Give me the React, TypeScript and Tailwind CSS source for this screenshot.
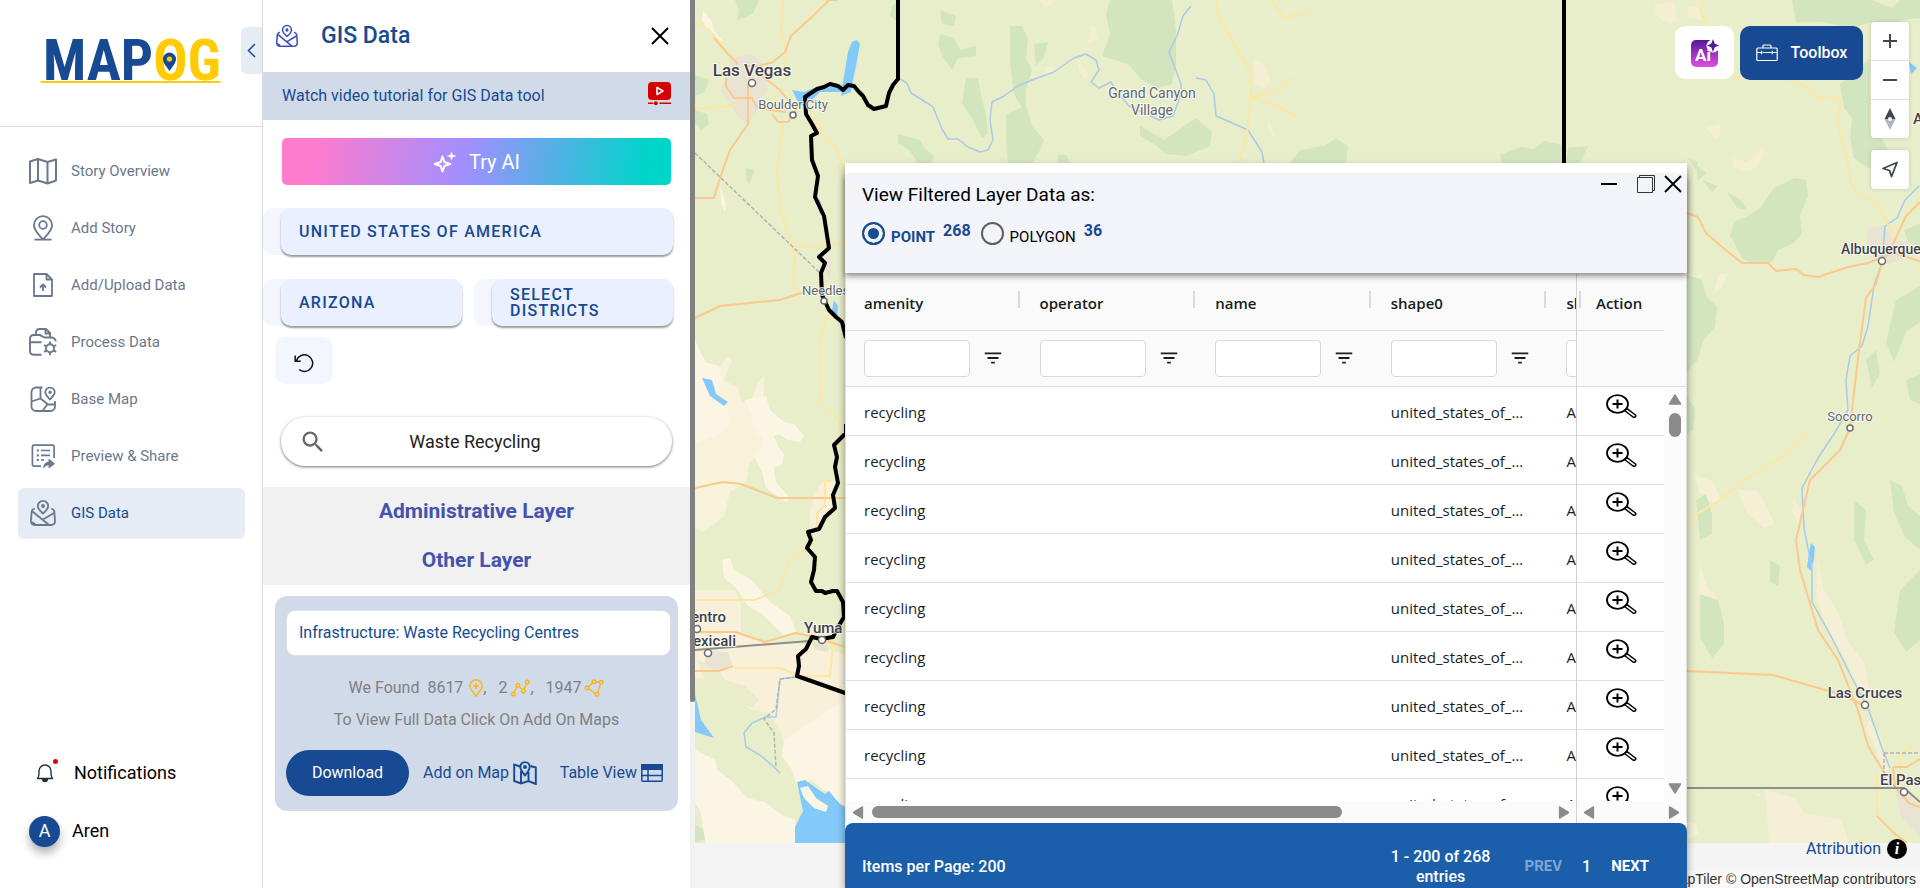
import { FC, ReactNode } from "react";
import { clsx } from "clsx";
import { MdSearch, MdFilterList } from "react-icons/md";

interface IconProps {
  className?: string;
}

const StoryIcon: FC<IconProps> = ({ className }) => (
  <svg viewBox="0 0 28 28" className={className} fill="none" stroke="currentColor" strokeWidth="2" strokeLinejoin="round">
    <path d="M1 4.500 9 2l9.500 3L27 2.500v21L18.500 26.500 9 23.500l-8 2.500zM9 2v21.500M18.500 5v21.500" />
  </svg>
);

const PinIcon: FC<IconProps> = ({ className }) => (
  <svg viewBox="0 0 28 28" className={className} fill="none" stroke="currentColor" strokeWidth="1.800">
    <path d="M14 25.500C10 21 4.900 16.500 4.900 11.300a9.100 9.100 0 0 1 18.200 0C23.100 16.500 18 21 14 25.500z" />
    <circle cx="14" cy="11" r="3.800" />
    <path d="M5.500 25.600h17" />
  </svg>
);

const UploadIcon: FC<IconProps> = ({ className }) => (
  <svg viewBox="0 0 28 28" className={className} fill="none" stroke="currentColor" strokeWidth="1.800" strokeLinejoin="round">
    <path d="M5 3h12.500l5.500 5.500V25H5zM17.500 3v5.500H23" />
    <path d="M14 20v-6M11 16.500l3-3 3 3" />
  </svg>
);

const ProcessIcon: FC<IconProps> = ({ className }) => (
  <svg viewBox="0 0 28 28" className={className} fill="none" stroke="currentColor" strokeWidth="1.900" strokeLinejoin="round">
    <path d="M12.500 26.800H4.500A3.500 3.500 0 0 1 1 23.300V10.500A3.500 3.500 0 0 1 4.500 7H10c3 0 3 2.500 6 2.500h6a4.500 4.500 0 0 1 4.800 3.800M1 14.300h11.500" />
    <path d="M7 7V4.300A3.300 3.300 0 0 1 10.300 1H17l4 4v4M16.500 1v4.500H21" />
    <circle cx="21" cy="20.300" r="4" />
    <path d="M21 13.500v3M21 24v3.300M15 17l2.700 1.500M24.500 22.300l2.700 1.500M15 23.800l2.700-1.500M24.500 18.500l2.700-1.500" />
  </svg>
);

const BaseMapIcon: FC<IconProps> = ({ className }) => (
  <svg viewBox="0 0 28 28" className={className} fill="none" stroke="currentColor" strokeWidth="1.800" strokeLinejoin="round">
    <path d="M13.500 2.500H7A4.500 4.500 0 0 0 2.500 7v14.500A4.500 4.500 0 0 0 7 26h14.500a4.500 4.500 0 0 0 4.500-4.500V16" />
    <path d="M11.500 2.500v11L2.500 16.500M11.500 13.500l7 5.500-5 7M18.500 19.500H26" />
    <path d="M21 14.500c-2.500-2.700-4.700-4.700-4.700-7.200a4.700 4.700 0 0 1 9.400 0c0 2.500-2.200 4.500-4.700 7.200z" />
    <circle cx="21" cy="7.300" r=".8" />
  </svg>
);

const PreviewIcon: FC<IconProps> = ({ className }) => (
  <svg viewBox="0 0 28 28" className={className} fill="none" stroke="currentColor" strokeWidth="1.700">
    <path d="M12 24.200H5A1.600 1.600 0 0 1 3.400 22.600V4.800A1.600 1.600 0 0 1 5 3.200h18.500a1.600 1.600 0 0 1 1.600 1.600V16" />
    <path d="M12 8.500h9M12 13.300h9M12 18h3" />
    <path d="M7.800 8.500h2M7.800 13.300h2M7.800 18h2" strokeWidth="2.200" />
    <path d="M14.500 26c.5-4.500 3-6 5.500-6v-3l5.500 4.800L20 26v-3c-2.500 0-4 .8-5.500 3z" fill="currentColor" strokeWidth=".8" />
  </svg>
);

const GisIcon: FC<IconProps> = ({ className }) => (
  <svg viewBox="0 0 28 28" className={className} fill="none" stroke="currentColor" strokeWidth="1.800" strokeLinejoin="round">
    <path d="M5.800 9.500C3.800 10 3 11 2.700 12.500L2 21.500C1.800 24.500 3.300 26 6 26h16c2.700 0 4.200-1.500 4-4.500l-.7-9c-.3-1.500-1.100-2.500-3.100-3" />
    <path d="M3.500 12.500 19.500 25.500M14 20.500 25 14M2.500 23l3.500 2" />
    <path d="M14 14.500c-3-2.500-5.200-4.500-5.200-7.500a5.200 5.200 0 0 1 10.400 0c0 3-2.200 5-5.200 7.500z" />
    <circle cx="14" cy="7" r="1" />
  </svg>
);

const CloseIcon: FC<IconProps> = ({ className }) => (
  <svg viewBox="0 0 18 18" className={className} fill="none" stroke="currentColor" strokeWidth="2">
    <path d="M1 1l16 16M17 1 1 17" />
  </svg>
);

const ZoomRowIcon: FC<IconProps> = ({ className }) => (
  <svg viewBox="0 0 31 24" className={className} fill="none" stroke="currentColor" strokeWidth="1.800">
    <ellipse cx="11.500" cy="10" rx="10.500" ry="8.800" />
    <path d="M6.500 10h10M11.500 5.500v9" strokeWidth="2" />
    <path d="m18.500 16.500 2.500-1.800 8.500 6.300c1 1.500-1 2.800-2.500 2zM18.500 16.500l8.500 6.500" strokeWidth="1.500" strokeLinejoin="round" />
  </svg>
);

interface NavItem {
  title: string;
  icon: FC<IconProps>;
  active?: boolean;
}

const navItems: NavItem[] = [
  { title: "Story Overview", icon: StoryIcon },
  { title: "Add Story", icon: PinIcon },
  { title: "Add/Upload Data", icon: UploadIcon },
  { title: "Process Data", icon: ProcessIcon },
  { title: "Base Map", icon: BaseMapIcon },
  { title: "Preview & Share", icon: PreviewIcon },
  { title: "GIS Data", icon: GisIcon, active: true },
];

const Logo: FC = () => (
  <svg viewBox="0 0 184 60" className="h-[60px] w-[184px] overflow-visible" role="img" aria-label="MAPOG">
    <text x="4" y="54" fontSize="57" fontWeight="700" className="font-['Liberation_Sans_Narrow','Roboto_Condensed','Liberation_Sans',sans-serif]">
      <tspan fill="#174a92">MAP</tspan>
      <tspan fill="#ffcb05">OG</tspan>
    </text>
    <path d="M130.500 45c-4-5.500-6.500-8.500-6.500-12a6.500 6.500 0 0 1 13 0c0 3.500-2.500 6.500-6.500 12z" fill="#174a92" />
    <circle cx="130.500" cy="33" r="2.600" fill="#ffcb05" />
    <path d="M1 55h181l-1 2H2z" fill="#ffcb05" />
  </svg>
);

const Sidebar: FC = () => (
  <aside className="relative flex w-[263px] shrink-0 flex-col border-r border-[#d9dadc] bg-white">
    <div className="flex h-[127px] shrink-0 justify-center border-b border-[#d9dadc] pt-[26px]">
      <Logo />
    </div>
    <button
      aria-label="Collapse sidebar"
      className="absolute right-0 top-[27px] flex h-[47px] w-[21px] items-center justify-center rounded-l-md bg-[#e6ecf4] text-[#174a92]"
    >
      <svg viewBox="0 0 9 15" className="h-[15px] w-[9px]" fill="none" stroke="currentColor" strokeWidth="1.500">
        <path d="M8 1 1.500 7.500 8 14" />
      </svg>
    </button>
    <nav className="flex flex-col gap-[6px] pl-[18px] pr-[17px] pt-[19px]">
      {navItems.map(({ title, icon: Icon, active }) => (
        <a
          key={title}
          href="#"
          className={clsx(
            "flex h-[51px] items-center gap-[14px] rounded-md pb-[1px] pl-[11px] text-[15px]",
            active ? "bg-[#e5ecf5] text-[#174a92]" : "text-[#6b778c]"
          )}
        >
          <Icon className="h-7 w-7 text-[#6b778c]" />
          {title}
        </a>
      ))}
    </nav>
    <div className="mt-auto flex flex-col gap-[26px] pb-[41px] text-lg leading-8">
      <a href="#" className="flex items-center pl-[36px]">
        <span className="relative">
          <svg viewBox="0 0 18 20" className="h-5 w-[18px]" fill="none" stroke="#26323a" strokeWidth="1.400">
            <path d="M1.500 15.500c2-2.500 1.500-5 1.500-7.500a6 6 0 0 1 12 0c0 2.500-.5 5 1.500 7.500z" strokeLinejoin="round" />
            <path d="M6.500 16.500c.5 2.700 4.500 2.700 5 0z" fill="#26323a" />
          </svg>
          <span className="absolute -right-1 -top-1 h-[5px] w-[5px] rounded-full bg-[#d60000]" />
        </span>
        <span className="pl-5">Notifications</span>
      </a>
      <a href="#" className="flex items-center gap-3 pl-[29px]">
        <span className="flex h-[31px] w-[31px] items-center justify-center rounded-full bg-[#174a92] text-white shadow-[0_6px_10px_rgba(0,0,0,0.3)]">
          A
        </span>
        Aren
      </a>
    </div>
  </aside>
);

interface FilterButtonProps {
  children: ReactNode;
}

const FilterButton: FC<FilterButtonProps> = ({ children }) => (
  <div className="flex-1 rounded-[10px] bg-[#f3f6ff] pl-[18px]">
    <button className="flex h-[47px] w-full items-center rounded-[10px] bg-[#eaf0ff] pl-[18px] text-left text-base font-medium leading-4 tracking-[1.25px] text-[#174a92] shadow-[0_2px_2px_rgba(0,0,0,0.4)]">
      {children}
    </button>
  </div>
);

const GisPanel: FC = () => (
  <section className="relative flex w-[432px] shrink-0 flex-col bg-white pr-[5px]">
    <div className="absolute inset-y-0 right-0 w-[5px] bg-[#f1f1f1]">
      <div className="h-[702px] rounded-b-sm bg-[#808080]" />
    </div>
    <header className="flex h-[72px] items-center pl-3 pr-[21px]">
      <GisIcon className="h-6 w-6 text-[#3f51b5]" />
      <h2 className="ml-[22px] flex-1 text-[23px] font-medium text-[#174a92]">GIS Data</h2>
      <button aria-label="Close panel">
        <CloseIcon className="h-[18px] w-[18px]" />
      </button>
    </header>
    <div className="flex h-[48px] items-center justify-between border-t border-[#d8d8d8] bg-[#d1dae9] pb-[1px] pl-[19px] pr-[19px]">
      <a href="#" className="text-base text-[#174a92]">Watch video tutorial for GIS Data tool</a>
      <svg viewBox="0 0 23 24" className="mb-1 h-6 w-[23px]" fill="#d40000">
        <rect x="0" y="0" width="23" height="18" rx="4" />
        <path d="M9 5.500v7l6-3.500z" fill="none" stroke="#fff" strokeWidth="1.600" strokeLinejoin="round" />
        <path d="M0 20.500h5v1.500H0zM11.500 20.500H23v1.500H11.500z" />
        <circle cx="7.800" cy="21.300" r="2" />
      </svg>
    </div>
    <button className="mx-[19px] mt-[18px] flex h-[47px] items-center justify-center gap-3 rounded-[5px] bg-[linear-gradient(100deg,#ff7bcd_8%,#a28fff_47%,#00d5ca_93%)] text-xl text-white">
      <svg viewBox="0 0 24 22" className="h-[22px] w-6" fill="none" stroke="#fff" strokeWidth="2" strokeLinejoin="round">
        <path d="M9.500 5.500 11.300 11l6 2-6 2-1.800 5.500L7.700 15l-6-2 6-2z" />
        <path d="M18.500.5l1.200 3.300 3.800 1.200-3.800 1.200-1.200 3.300-1.200-3.300L13.500 5l3.800-1.200z" fill="#fff" stroke="none" />
      </svg>
      Try AI
    </button>
    <div className="flex flex-col gap-6 pr-[17px] pt-[23px]">
      <div className="flex">
        <FilterButton>UNITED STATES OF AMERICA</FilterButton>
      </div>
      <div className="flex gap-3">
        <FilterButton>ARIZONA</FilterButton>
        <FilterButton>
          SELECT
          <br />
          DISTRICTS
        </FilterButton>
      </div>
    </div>
    <button aria-label="Reset filters" className="ml-3 mt-[11px] flex h-[47px] w-[58px] items-center justify-center rounded-[10px] bg-[#f3f6ff]">
      <svg viewBox="0 0 20 20" className="mt-1 h-5 w-5" fill="none" stroke="#111" strokeWidth="1.500">
        <path d="M2.500 7.500A8.300 8.300 0 1 1 5 16.500M1.200 2.500v5.800h5.600" />
      </svg>
    </button>
    <label className="mx-[18px] mt-[33px] flex h-[49px] items-center rounded-full pl-[18px] pr-[60px] shadow-[0_1px_3px_rgba(0,0,0,0.55)]">
      <MdSearch className="h-7 w-7 shrink-0 text-[#666]" />
      <input
        type="text"
        aria-label="Search layers"
        defaultValue="Waste Recycling"
        className="ml-[11px] w-full min-w-0 text-center text-lg text-[#222] outline-none"
      />
    </label>
    <div className="mt-[21px] flex flex-col bg-[#f1f1f1] text-center text-[21px] font-bold leading-[49px] text-[#4553ae]">
      <h3>Administrative Layer</h3>
      <h3>Other Layer</h3>
    </div>
    <div className="mx-3 mt-[11px] rounded-xl bg-[#d1dae9] px-[11px] pb-[15px] pt-[14px]">
      <h4 className="mr-[-4px] rounded-[9px] border border-[#dcdfe3] bg-white pl-3 text-base leading-[44px] text-[#174a92]">
        Infrastructure: Waste Recycling Centres
      </h4>
      <div className="mt-4 flex flex-col text-center text-base leading-8 text-[#808080]">
        <p className="flex items-center justify-center">
          We Found&nbsp; 8617
          <svg viewBox="0 0 14 18" className="ml-[6px] h-[18px] w-[14px]" fill="none" stroke="#fdb515" strokeWidth="1.400">
            <path d="M7 17C4 13 .8 10.500.8 7a6.200 6.200 0 0 1 12.400 0c0 3.500-3.200 6-6.200 10zM7 4v6M4 7h6" />
          </svg>
          ,&nbsp;&nbsp; 2
          <svg viewBox="0 0 20 18" className="ml-[3px] h-[18px] w-5" fill="none" stroke="#fdb515" strokeWidth="1.400">
            <path d="M4 13.500 7 7.500M9.300 7.800l3 3M14 10.500l2.800-6" />
            <circle cx="3.300" cy="15" r="1.800" />
            <circle cx="7.800" cy="6.300" r="1.800" />
            <circle cx="13.300" cy="12" r="1.800" />
            <circle cx="17.300" cy="3" r="1.800" />
          </svg>
          ,&nbsp;&nbsp; 1947
          <svg viewBox="0 0 20 18" className="ml-[3px] h-[18px] w-5" fill="none" stroke="#fdb515" strokeWidth="1.400">
            <path d="M4 8 8.500 4M11.500 2.700l4 .5M16.500 5l-3 8.500M11 14 4.500 10" />
            <circle cx="3" cy="9" r="1.800" />
            <circle cx="10" cy="2.800" r="1.800" />
            <circle cx="17.200" cy="3.300" r="1.800" />
            <circle cx="12.800" cy="15.200" r="1.800" />
          </svg>
        </p>
        <p>To View Full Data Click On Add On Maps</p>
      </div>
      <div className="mt-[14px] flex items-center text-base text-[#174a92]">
        <button className="h-[46px] w-[123px] rounded-full bg-[#174a92] text-white">Download</button>
        <button className="ml-[14px] flex items-center gap-1 whitespace-nowrap">
          Add on Map
          <svg viewBox="0 0 24 24" className="h-6 w-6" fill="none" stroke="currentColor" strokeWidth="1.900">
            <path d="M7 5.500 1.200 3.500v16.500L8 22.500l7.500-2.500 7.300 3V6.500L17.500 5M8 10v12.500M15.500 11v9" />
            <path d="M12 14.500C9.500 11.500 7.300 9 7.300 5.800a4.700 4.700 0 0 1 9.400 0c0 3.200-2.200 5.700-4.700 8.700z" />
            <circle cx="12" cy="6" r="1" fill="currentColor" />
          </svg>
        </button>
        <button className="ml-auto mr-1 flex items-center gap-1 whitespace-nowrap">
          Table View
          <svg viewBox="0 0 22 18" className="h-[18px] w-[22px]" fill="none" stroke="currentColor" strokeWidth="1.500">
            <rect x=".8" y=".8" width="20.400" height="16.400" rx="1" />
            <path d="M0 0h22v6H0z" fill="currentColor" stroke="none" />
            <path d="M0 11.500h22M7 6v12" />
          </svg>
        </button>
      </div>
    </div>
  </section>
);

const MapCanvas: FC = () => (
  <svg
    viewBox="695 0 1225 843"
    preserveAspectRatio="xMinYMin slice"
    className="absolute inset-x-0 top-0 h-[843px] w-full"
    fontFamily="Roboto, sans-serif"
    fill="none"
  >
    <rect x="695" y="0" width="1225" height="843" fill="#e8edca" />
    <g fill="#fbf5e3">
      <path d="M695 350l8 6 6 14 9 4 2-8 8-10 4 4-8 20 14 8 4 14 8 2 8-22 6-6 0 14-4 30 6 12-2 20-14 10-4 20-16 10-6 24-20 16-9-4z" fill="#f8f2da" />
      <path d="M695 340l10 22 14 4 4 14-8 16 10 8 6 16-10 14-26 10z" />
      <path d="M703 10l8 10 4 12 7 8-4 2-12-14-4-8zM720 185l6 18-1 10-4-10z" />
      <path d="M766 396l4 14 14 12 10 2 10 12-4 6-12-2-10-6-4 2 4 10 6 8-2 10-8 4 2 14 14 16-4 4-20-14-4-16-8-16 6-4 2-14-10-12 0-12-8-14zM722 560l8-2 4 12 18 10 18 22 20 14 6 16-12 4-22-22-14-8-12-18-12-10z" />
      <path d="M695 590h40l6 14 0 30 30 10 40 0 34 10v143l-24-8-6-10-10-4-16-20-8-22-12-20-20-4-26-24-28-8z" fill="#f8f0d9" />
      <path d="M695 750l20 10 12 10 14 4 18 22 18 14 18 8v25H705l-4-30-6-10z" />
      <path d="M784 740l61-40v108l-20-18-15-10-12 10-6-20-10-14z" />
      <path d="M828 480l10 2-4 26-10 12-8 4-6 8 0-20 4-16 6-12z" fill="#f8f0d9" />
      <path d="M1690 275l12 0-6 12zM1718 275l10-2-6 14-8 6zM1695 475l18 6 8 20-8 4-14-14zM1738 490l18 0 10 14 8 20-10 4-18-16zM1794 498l8 12-4 14-6-12z" fill="#f5efd5" />
      <path d="M1700 565l6 20 12 14 4 20-10-2-14-24zM1818 560l6 30 14 22 10 30 16 20 6 34-10-6-16-34-18-30-10-30z" fill="#f5efd5" />
      <path d="M1870 720l12 20 6 30-4 4-8-26-10-20zM1765 790l30 8 10 16 36 5 8 24h-80zM1755 793l6 0-2 4zM1687 822l10 2 2 10-12 5z" fill="#f5efd5" />
      <path d="M1090 25l8 14-10 6zM1038 0h18l-10 8zM1044 67l10 0-2 6-6 4zM1090 24l6 4-2 12-4 4zM1076 55l12 18-2 6-6-6zM1253 57l10 6 8 18-6 8-10-6zM1265 115l12 22-6-2z" fill="#f4eed3" />
      <path d="M1733 158l14 4 14-14 4 2-6 16-12 6-14-4zM1655 5l20-4 2 20-8 4-14-10zM1687 6l12 2 4 12-14-2zM1706 128l14-4 0 10-4 6z" fill="#f4eed3" />
    </g>
    <g fill="#d3e5bf">
      <path d="M735 0h24l-6 14-16 6 2-10zM746 168l8 2-4 14-4-4zM695 75l14 5-4 12-10 4zM695 110l12 4 2 10-8 6-6-8z" />
      <path d="M892 6l6-4v20l-8-6zM940 10l16 6-2 10-12-2zM940 34l14 4 6 12 16-4 0 10-18 2-6 12-10-14-4-12zM1010 26l12 0 6 12-2 20 6 12-6 20 0 20-4-2-8-14-4-30zM1034 44l14-2-4 16-8 8z" />
      <path d="M966 78l12 0 4 22 4 14 2 20-6 4-10-20-10-14zM898 134l22 6 4 8 10 8-2 7h-14l-8-12-12-8zM1006 114l20-8 6 20 12 14-4 10-8 13h-24l-2-24z" />
      <path d="M1110 0h62l4 30 0 34-4 20-14 4-16-8-14-16-26-8 8-22-4-20zM1140 126l24 14 32-22 16 14-2 14-24 10-20-2-12-10-14-8zM1058 155l8 0 4 8h-12z" />
      <path d="M1792 0h60l20 0 20 8 8-8h20v18l-20 2-8 8-20-6-20 6-30-6-26 0zM1840 84l24-20 6-6v78h10l12 20-8 10-16 2-14-10-4-20 2-20-8-10z" />
      <path d="M1734 222l14-6 12-8 14-20 20-10 12 2 2 16-8 20 2 18-10 10-14 6-6 12-20 2-10-6-8-16-4-6zM1727 192l14 8 6 10-10-2zM1702 180l16 6-6 6zM1688 158l10 4-2 8zM1687 275l14 4 6 18 10 10-2 20-12 14-6 20-10 10zM1696 165l10 8-8 8z" />
      <path d="M1904 230l16-6v24l-12-6zM1896 300l24-14v36l-14 10-12 30-8-20zM1866 360l10-10 4 24-8 14zM1687 396l8 14-2 20-6 4zM1696 500l10-6 6 20 0 20-12 6zM1906 380l14-6v30l-10-4z" />
      <path d="M1890 480l12 6 6 20 12 10v34l-16-14-10-24zM1854 500l12 10-2 30 10 20-8 4-12-24zM1700 594l18 6 6 24 0 20-12 14-12-20zM1900 590l20-20v70l-14 12-12-20zM1770 560l10 6-2 20-8-4z" />
      <path d="M1300 150l24-4 12-8 12 8-2 17h-56zM1500 155l20-8 14 2 10-8 18 4v18h-60zM1568 148l20-2-8 17h-14z" />
      <path d="M695 825l8 4 2 10-10 4z" />
    </g>
    <g fill="#e9edcb">
      <path d="M697 660l20 8 8 12 20 6 14 14-6 8-16-6-18-4-14-18zM715 756l16 12 14 4 10 14 20 10 20 14 12 0-4 12-20-6-18-14-18-4-16-18-14-10zM760 730l12 6 2 14-10-2z" />
    </g>
    <g fill="#e9e3d3">
      <path d="M732 58l20-4 12 12 4 24-8 10-4 14-10 10-10-10-8-14-8-10 8-18zM1868 228l16-2 8 12 16 4-2 16-18 6-14-4-8-12zM708 650l20 2 4 12-14 8-14-8zM812 644l16 0 0 8-12-2zM1895 790l16 6 9 14v26l-18-18zM826 250l6 10-2 20-4-10z" />
    </g>
    <g fill="#83cafa">
      <path d="M857 40l3 4-4 22-3 14-2 12-10 4 2-14 5-30 4-10zM792 90l12 2 10-4 12 0 18-4 6 8-16 0-14 0-10 10-10 4z" />
      <path d="M814 196l6 4 4 14-4 0zM834 300l4 6-1 14-5-10zM695 694l6 26 13 18-19-6zM702 378l10 2 4 14 12 8-4 4-14-10z" />
      <path d="M797 782l8-2 20 14 4-3 10 12 6 4v36h-50v-16l8-16z" />
      <path d="M1811 543l4 4-1 12-3 12-4-4 2-14zM1909 62l8 6-6 6z" />
    </g>
    <path d="M800 788l8-2 8 12 12 8-2 6-12-4-10-10z" fill="#fbf5e3" />
    <g stroke="#a9cbe6" strokeWidth="1.500" strokeLinejoin="round">
      <path d="M900 79l7 4 4 10 16 10 6 4 9 22 6 10 10 0 10 8 12 5 8-2 5-10-3-20 2-18 12-6 14-10 14-6 22-8 20-14 12-4 10 6 3 10-8 12 8 6 12-6 6 10 12 14 30 14 14-4 8-22 0-10-12-32 8-16 6-20 8-10M1196 78l10 2 8 14 2 22 14 6 18 8 14 22 2 11" />
      <path d="M1919 186l-14 14-8 18-12 8-3 36-8 24-6 40-6 20-12 10-4 24 2 30-14 24-16 24-16 30 2 40 8 40 0 34 20 36 20 40 16 30 14 40 8 20" />
      <path d="M796 677l-16 2-4 38-10 0-14 6-8 10 2 14 14 8 14 12 6 6" />
    </g>
    <g stroke="#fde7a3" strokeWidth="2" strokeLinejoin="round">
      <path d="M783 0l-2 34 6 14-2 30M695 108l24 0 20-4M783 122l-6 50 4 40 14 40-2 34 8 8M810 112l12 22 14 14 8 22M793 243l22 5 10-4 20 0M829 310l-9 30v60M1216 0l4 20 20 34 11 20v20l-4 40-8 29M1270 0l16 18 24-8M1252 97l26-6 14-14M1252 97l24 8 20 12M695 22l14 8 14 16" />
      <path d="M817 400l22 20 2 30M817 533v-20l8-8v-24h6M695 600h60l24-10 10-30 14-8 10-10M734 668l46 0 20 8h30l4-42" />
      <path d="M1704 0l-4 12 14 24 20 40 10 6M1787 80l18 6 12 12h20l4 6-4 14 4 20 8 30 2 16 10 14 10 0 10 14 14 26M1877 772v44M1914 745l-14 10 0 40" />
      <path d="M1687 520l30-18 30-24 34-20 30-28" />
    </g>
    <g stroke="#fcc98d" strokeWidth="2" strokeLinejoin="round">
      <path d="M837 0l-8 0-16 16-22 20-6 16-12 10-14 4M714 38l14 16 10 10M726 78l0 8 8 12h18l4 8 14 4 16 2M748 84v40l-18 26-10 28-6 20-20 0M695 318l25-12 60-6 24-8M748 66l8 0 6 10 18 14 16 20-8 12-10 0-6-8" />
      <path d="M695 488l28-6 18 2 36 14 68 0M695 632h40l30 10 30-9 20 4 30 10M695 671h24l14-5" />
      <path d="M1687 213l11 4 8 16 16 14 20 16 26 0 8 8 20-2 8 6 14 2 30-10 20-4 26-10 44 14 2-6M1882 262l-6 22-10 14-8 60-8 70-10 22-30 30-14 60 4 30 18 60 20 30 20 50 10 36 16 26 8 8M1920 202l-14 14-14 30-10 16" />
      <path d="M1863 705l-20-10-70-20-86-4M1877 816l18 18 12 9M1893 767l14 0 13-8M1893 767l2 20 14 16 11 4" />
    </g>
    <path d="M695 153l125 120" stroke="#b3b3ad" strokeWidth="1.500" strokeDasharray="4 2" />
    <path d="M796 677l-16 2-4 30-12 10 10 14 2 34" stroke="#b3b3b8" strokeWidth="1.500" strokeDasharray="4 2" />
    <path d="M1884 753h36M1884 753v24l14 12" stroke="#b3b3b8" strokeWidth="1.500" strokeDasharray="4 2" />
    <path d="M695 650l115-9M1687 788h217l16 14" stroke="#8f8f8a" strokeWidth="2" />
    <path
      d="M898 0v79l-5 6-4 8-3 13-12 3-6-4-5-9-4-4-5-6-6-1-5 5-5-4-8-2-6 3-7 2-12 8 1 17 6 10 5 9-6 3 1 24 6 16-3 21 9 19 5 32-10 9 6 6-4 10 1 22 7 15 7 7 6 5 4 16"
      stroke="#000"
      strokeWidth="4"
      strokeLinejoin="round"
    />
    <path
      d="M846 424v9l-12 12 3 12-2 10 3 16-5 12 2 13-10 9-6 12-11 3 3 8-4 8 8 9-1 13-3 12 5 9 6 0 3 2 8-2h4l6 11 1 15-6 10-5 10-12 2-9-2-6 12-8 7 1 10-2 10 51 18"
      stroke="#000"
      strokeWidth="4"
      strokeLinejoin="round"
    />
    <path d="M1564 0v170" stroke="#000" strokeWidth="4" />
    <g fill="#fff" stroke="#6c6c6c" strokeWidth="1.500">
      <circle cx="752" cy="83" r="3.500" />
      <circle cx="793" cy="115" r="3" />
      <circle cx="824" cy="301" r="3" />
      <circle cx="697" cy="629" r="3.500" />
      <circle cx="708" cy="653" r="3.500" />
      <circle cx="822" cy="640" r="3.500" />
      <circle cx="1882" cy="261" r="3.500" />
      <circle cx="1850" cy="428" r="3" />
      <circle cx="1865" cy="705" r="3.500" />
      <circle cx="1904" cy="792" r="3.500" />
    </g>
    <g fill="#3f4248" stroke="#fff" strokeWidth="2" strokeOpacity=".8" paintOrder="stroke" fontSize="15" fontWeight="500">
      <text x="752" y="76" fontSize="17" textAnchor="middle">Las Vegas</text>
      <text x="804" y="633">Yuma</text>
      <text x="726" y="622" textAnchor="end">El Centro</text>
      <text x="736" y="646" textAnchor="end">Mexicali</text>
      <text x="1841" y="254" fontSize="14">Albuquerque</text>
      <text x="1865" y="698" textAnchor="middle">Las Cruces</text>
      <text x="1880" y="785">El Paso</text>
      <text x="1885" y="124">Los Alamos</text>
    </g>
    <g fill="#63666b" stroke="#fff" strokeWidth="2" strokeOpacity=".8" paintOrder="stroke" fontSize="13">
      <text x="793" y="109" textAnchor="middle">Boulder City</text>
      <text x="802" y="295">Needles</text>
      <text x="1152" y="98" fontSize="14" textAnchor="middle">Grand Canyon</text>
      <text x="1152" y="115" fontSize="14" textAnchor="middle">Village</text>
      <text x="1850" y="421" textAnchor="middle">Socorro</text>
    </g>
  </svg>
);

const MapControls: FC = () => (
  <div className="absolute right-[11px] top-[22px] flex items-start">
    <button aria-label="AI assistant" className="mt-1 flex h-[53px] w-[59px] items-center justify-center rounded-[10px] bg-white">
      <svg viewBox="0 0 28 28" className="h-7 w-7">
        <defs>
          <linearGradient id="ai-fill" x1="0" y1="0" x2="0" y2="1">
            <stop offset="0" stopColor="#54189c" />
            <stop offset="1" stopColor="#e04fe0" />
          </linearGradient>
        </defs>
        <rect x="0" y="1" width="27" height="27" rx="5" fill="url(#ai-fill)" />
        <circle cx="22" cy="7" r="6.500" fill="#fff" />
        <path d="M22 0l1.800 4.700L28 6.500l-4.200 1.800L22 13l-1.800-4.700L16 6.500l4.200-1.800z" fill="#54189c" />
        <text x="4" y="22" fontSize="17" fontWeight="700" fill="#fff" fontFamily="Roboto, sans-serif">Ai</text>
      </svg>
    </button>
    <button className="ml-[6px] mt-1 flex h-[54px] w-[123px] items-center justify-center gap-[13px] rounded-[10px] bg-[#174a92] text-base font-medium text-white">
      <svg viewBox="0 0 22 18" className="h-[18px] w-[22px]" fill="none" stroke="currentColor" strokeWidth="1.200">
        <rect x=".8" y="4" width="20.400" height="12.500" rx="1" />
        <path d="M7 4V2a1 1 0 0 1 1-1h6a1 1 0 0 1 1 1v2M.8 8.500h4M6.500 8.500h9M17 8.500h4.200M5.500 6.800v3.500M16.300 6.800v3.500" />
      </svg>
      Toolbox
    </button>
    <div className="ml-2 flex w-[38px] flex-col gap-3 text-[#42464d]">
      <div className="flex flex-col divide-y divide-[#ddd] rounded bg-white shadow-[0_0_4px_rgba(0,0,0,0.15)]">
        <button aria-label="Zoom in" className="flex h-[39px] items-center justify-center">
          <svg viewBox="0 0 16 16" className="h-4 w-4" stroke="currentColor" strokeWidth="2">
            <path d="M1 8h14M8 1v14" />
          </svg>
        </button>
        <button aria-label="Zoom out" className="flex h-[39px] items-center justify-center">
          <svg viewBox="0 0 16 16" className="h-4 w-4" stroke="currentColor" strokeWidth="2">
            <path d="M1 8h14" />
          </svg>
        </button>
        <button aria-label="Reset north" className="flex h-[38px] items-center justify-center">
          <svg viewBox="0 0 12 22" className="h-[22px] w-3">
            <path d="M6 0l5.500 11H.5z" fill="#42464d" />
            <path d="M6 22l5.500-11H.5z" fill="#b0b7c4" />
            <circle cx="6" cy="11" r="2" fill="#fff" />
          </svg>
        </button>
      </div>
      <button aria-label="Find my location" className="flex h-[39px] items-center justify-center rounded bg-white shadow-[0_0_4px_rgba(0,0,0,0.15)]">
        <svg viewBox="0 0 16 17" className="h-[17px] w-4" fill="none" stroke="currentColor" strokeWidth="1.800" strokeLinejoin="round">
          <path d="M15 1.500 9.500 15.500 7.500 9.500 1 7.500z" />
        </svg>
      </button>
    </div>
  </div>
);

const columns = ["amenity", "operator", "name", "shape0", "shape1"];
const rows = Array.from({ length: 9 }, () => ["recycling", "", "", "united_states_of_america", "Arizona"]);

const ArrowIcon: FC<IconProps> = ({ className }) => (
  <svg viewBox="0 0 14 11" className={clsx("h-[11px] w-[14px] shrink-0", className)}>
    <path d="M7 1l5.500 9h-11z" fill="#8b8b8b" stroke="#8b8b8b" strokeWidth="1.500" strokeLinejoin="round" />
  </svg>
);

const DataGrid: FC = () => (
  <div className="flex min-h-0 flex-1 overflow-hidden border-x border-[#dddfe1] font-['Segoe_UI','Open_Sans',sans-serif] text-[15px] text-[#181d1f]">
    <div className="w-[730px] shrink-0 overflow-hidden">
      <table className="w-[878px] table-fixed border-collapse text-left">
        <thead className="bg-[#fafafa]">
          <tr className="h-[57px] border-b border-[#dddfe1]">
            {columns.map((column) => (
              <th key={column} className="pl-[18px] pt-1 font-semibold">
                <div className="flex items-center justify-between">
                  {column}
                  <span className="mb-2 mr-[2px] h-[17px] w-[2px] bg-[#d8dadc]" />
                </div>
              </th>
            ))}
          </tr>
          <tr className="h-[56px] border-b border-[#dddfe1]">
            {columns.map((column) => (
              <td key={column} className="pl-[18px]">
                <div className="flex items-center gap-3">
                  <input type="text" aria-label={`${column} filter`} className="h-[37px] w-[106px] rounded border border-[#d6d8da] bg-white px-2" />
                  <button aria-label={`Open ${column} filter menu`}>
                    <MdFilterList className="h-[22px] w-[22px]" />
                  </button>
                </div>
              </td>
            ))}
          </tr>
        </thead>
        <tbody>
          {rows.map((row, index) => (
            <tr key={index} className="h-[49px] border-b border-[#dddfe1]">
              {row.map((cell, cellIndex) => (
                <td key={cellIndex} className="truncate px-[18px] pt-1">{cell}</td>
              ))}
            </tr>
          ))}
        </tbody>
      </table>
    </div>
    <div className="min-w-0 flex-1 border-l border-[#cfd1d3]">
      <table className="w-full table-fixed border-collapse text-left">
        <thead className="bg-[#fafafa]">
          <tr className="h-[57px] border-b border-[#dddfe1]">
            <th className="pt-1 font-semibold">
              <div className="flex items-center gap-[15px]">
                <span className="mb-2 ml-[2px] h-[17px] w-[2px] bg-[#d8dadc]" />
                Action
              </div>
            </th>
          </tr>
          <tr className="h-[56px] border-b border-[#dddfe1]">
            <td />
          </tr>
        </thead>
        <tbody>
          {rows.map((_, index) => (
            <tr key={index} className="h-[49px] border-b border-[#dddfe1]">
              <td className="pb-[10px] pl-[29px]">
                <button aria-label={`Zoom to row ${index + 1}`} className="block">
                  <ZoomRowIcon className="h-6 w-[31px] text-black" />
                </button>
              </td>
            </tr>
          ))}
        </tbody>
      </table>
    </div>
    <div className="flex w-[22px] shrink-0 flex-col">
      <div className="h-[114px] shrink-0 border-b border-[#dddfe1] bg-[#fafafa]" />
      <div className="flex min-h-0 flex-1 flex-col items-center bg-[#fbfbfb] py-[7px]">
        <ArrowIcon />
        <div className="mt-2 h-6 w-3 rounded-full bg-[#8b8b8b]" />
        <ArrowIcon className="mt-auto rotate-180" />
      </div>
    </div>
  </div>
);

const LayerDialog: FC = () => (
  <div role="dialog" aria-label="Filtered layer data" className="absolute bottom-0 left-[150px] top-[163px] flex w-[842px] flex-col bg-white shadow-[0_4px_8px_rgba(0,0,0,0.4)]">
    <div className="relative z-10 mt-3 flex h-[98px] shrink-0 justify-between bg-[#f3f4f9] shadow-[0_3px_6px_rgba(0,0,0,0.45)]">
      <fieldset className="pl-[17px] pt-[6px]">
        <legend className="float-left text-[19px] leading-7">View Filtered Layer Data as:</legend>
        <div className="clear-both flex items-center pt-[8px] text-[15px] leading-6">
          <label className="flex h-8 items-center gap-[6px] font-bold text-[#174a92]">
            <input
              type="radio"
              name="geometry"
              defaultChecked
              className="h-[23px] w-[23px] appearance-none rounded-full border-2 border-[#5f5f5f] checked:border-[#174a92] checked:bg-[#174a92] checked:shadow-[inset_0_0_0_4px_#f3f4f9]"
            />
            <span className="pt-2">POINT</span>
            <span className="pb-1 pl-[2px] text-base">268</span>
          </label>
          <label className="ml-[10px] flex h-8 items-center gap-[6px]">
            <input
              type="radio"
              name="geometry"
              className="h-[23px] w-[23px] appearance-none rounded-full border-2 border-[#5f5f5f] checked:border-[#174a92] checked:bg-[#174a92]"
            />
            <span className="pt-2">POLYGON</span>
            <span className="pb-1 pl-[2px] text-base font-bold text-[#174a92]">36</span>
          </label>
        </div>
      </fieldset>
      <div className="flex h-[18px] items-center pr-[5px]">
        <button aria-label="Minimize" className="flex h-[18px] items-center">
          <span className="h-[2px] w-4 bg-black" />
        </button>
        <button aria-label="Maximize" className="ml-5">
          <svg viewBox="0 0 18 18" className="h-[18px] w-[18px]" fill="none" stroke="#333">
            <path d="M.5 2.500h15v15H.500zM2.500 2.500v-2h15v15h-2" />
          </svg>
        </button>
        <button aria-label="Close" className="ml-[9px]">
          <CloseIcon className="h-[18px] w-[18px]" />
        </button>
      </div>
    </div>
    <DataGrid />
    <div className="flex h-[22px] shrink-0 items-center border-x border-[#dddfe1] bg-[#fbfbfb]">
      <div className="flex h-full w-[731px] items-center border-r border-[#cfd1d3] px-[5px]">
        <ArrowIcon className="-rotate-90" />
        <div className="ml-[7px] h-3 w-[470px] rounded-full bg-[#8b8b8b]" />
        <ArrowIcon className="ml-auto rotate-90" />
      </div>
      <div className="flex flex-1 items-center justify-between px-[5px]">
        <ArrowIcon className="-rotate-90" />
        <ArrowIcon className="rotate-90" />
      </div>
    </div>
    <footer className="flex h-[65px] shrink-0 items-center rounded-t-lg bg-[#1b5faa] pl-[17px] pr-[38px] pt-[22px] text-base font-medium text-white">
      <span className="flex-1">Items per Page: 200</span>
      <span className="w-[120px] text-center leading-5">1 - 200 of 268 entries</span>
      <div className="ml-[24px] flex items-center gap-5 text-[15px]">
        <button className="font-bold text-[#7fa5d2]">PREV</button>
        <span className="text-base">1</span>
        <button className="font-bold">NEXT</button>
      </div>
    </footer>
  </div>
);

const App: FC = () => (
  <div className="flex h-screen w-full overflow-hidden bg-white font-[Roboto,sans-serif] text-black">
    <Sidebar />
    <GisPanel />
    <main className="relative min-w-0 flex-1 overflow-hidden bg-[#f4f4f4]">
      <MapCanvas />
      <MapControls />
      <div className="absolute bottom-0 right-0 flex flex-col items-end">
        <a href="#" className="flex items-center gap-[6px] pr-[13px] text-base text-[#174a92]">
          Attribution
          <span className="flex h-5 w-5 items-center justify-center rounded-full bg-black font-['Liberation_Serif',serif] text-base font-bold italic text-white">
            i
          </span>
        </a>
        <p className="mt-[9px] bg-[#f9f9f9] px-1 font-['Liberation_Sans',sans-serif] text-sm leading-[18px] text-[#333]">
          © MapTiler © OpenStreetMap contributors
        </p>
      </div>
      <LayerDialog />
    </main>
  </div>
);

export default App;
